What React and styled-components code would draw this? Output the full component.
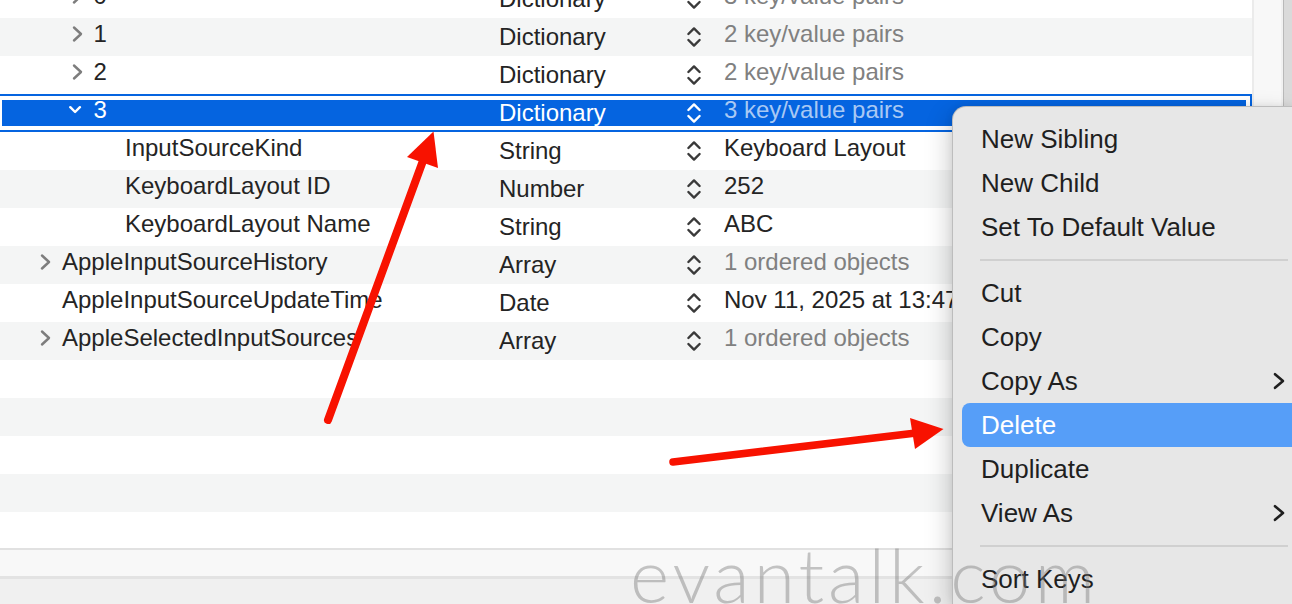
import React from 'react';
import styled, { createGlobalStyle } from 'styled-components';

const GlobalStyle = createGlobalStyle`
  html, body { margin: 0; padding: 0; background: #fff; }
  body { font-family: "Liberation Sans", Arial, sans-serif; overflow: hidden; }
  * { box-sizing: border-box; }
`;

const Window = styled.div`
  position: relative;
  width: 1292px;
  height: 604px;
  overflow: hidden;
  display: flex;
  flex-direction: column;
  background: #f0f0f0;
`;

const Main = styled.div`
  display: flex;
  height: 548px;
  flex: none;
`;

const Outline = styled.div`
  width: 1252px;
  flex: none;
  height: 100%;
  overflow: hidden;
  background: #fff;
`;

const RowList = styled.div`
  margin: -20px 0 0 -4px;
  width: 1256px;
`;

const Row = styled.div`
  display: grid;
  grid-template-columns: 503px 187px 38px 1fr;
  height: 38px;
  font-size: 24px;
  white-space: nowrap;
  color: ${(p) => (p.$selected ? '#ffffff' : '#242424')};
  background: ${(p) => (p.$selected ? '#0564e0' : p.$striped ? '#f4f5f5' : '#ffffff')};
  box-shadow: ${(p) =>
    p.$selected ? 'inset 0 0 0 2px #0564e0, inset 0 0 0 6px #ffffff' : 'none'};
`;

const KeyCell = styled.div`
  display: flex;
  align-items: center;
  padding-left: ${(p) => 41 + p.$level * 31.5}px;
  padding-bottom: 6px;
  line-height: 24px;
  overflow: hidden;
`;

const Disclosure = styled.span`
  width: 25px;
  height: 18px;
  flex: none;
  display: flex;
  align-items: center;
`;

const TypeCell = styled.div`
  line-height: 38px;
  overflow: hidden;
`;

const StepperCell = styled.div`
  display: flex;
  align-items: center;
  padding-bottom: 1px;
`;

const ValueCell = styled.div`
  display: flex;
  align-items: center;
  padding-bottom: 6px;
  line-height: 24px;
  overflow: hidden;
  color: ${(p) =>
    p.$muted ? (p.$selected ? 'rgba(255,255,255,0.66)' : '#808080') : 'inherit'};
`;

const Scroller = styled.div`
  width: 31px;
  flex: none;
  background: #f8f8f8;
  border-left: 2px solid #ebebeb;
  border-right: 2px solid #f1f1f1;
`;

const SidePanel = styled.div`
  flex: 1;
  background: #dadada;
  border-left: 1px solid #b9b9b9;
`;

const FooterBar = styled.div`
  flex: none;
  height: 31px;
  background: #f8f8f8;
  border-top: 2px solid #e1e1e1;
  border-bottom: 3px solid #e3e3e3;
`;

const Menu = styled.div`
  position: absolute;
  left: 952px;
  top: 106px;
  width: 340px;
  height: 498px;
  padding: 10px 0 0 9px;
  background: #e7e7e7;
  border: 1px solid rgba(0, 0, 0, 0.18);
  border-right: none;
  border-bottom: none;
  border-radius: 14px 0 0 0;
  box-shadow: -4px 8px 24px rgba(0, 0, 0, 0.18), 0 0 8px rgba(0, 0, 0, 0.08);
  font-size: 26px;
  color: #1f1f1f;
`;

const MenuItem = styled.div`
  display: flex;
  align-items: center;
  height: 44px;
  line-height: 44px;
  padding: 0 7px 0 19px;
  border-radius: 8px 0 0 8px;
  white-space: nowrap;
  background: ${(p) => (p.$active ? '#569ef8' : 'transparent')};
  color: ${(p) => (p.$active ? '#ffffff' : 'inherit')};
`;

const SubArrow = styled.svg`
  margin-left: auto;
  flex: none;
`;

const Separator = styled.div`
  height: 22px;
  display: flex;
  align-items: center;
  padding: 0 4px 0 18px;
  &::before {
    content: '';
    flex: 1;
    height: 2px;
    background: #d0d0d0;
  }
`;

const Annotations = styled.svg`
  position: absolute;
  left: 0;
  top: 0;
  width: 1292px;
  height: 604px;
  pointer-events: none;
`;

const Watermark = styled.div`
  position: absolute;
  left: 630px;
  top: 537px;
  height: 67px;
  overflow: hidden;
  font-family: Lato, "Open Sans", sans-serif;
  font-weight: 300;
  font-size: 75px;
  line-height: 75px;
  letter-spacing: 4px;
  color: rgba(120, 120, 120, 0.42);
  pointer-events: none;
  white-space: nowrap;
`;

const Chevron = ({ dir, color }) =>
  dir === 'down' ? (
    <svg width="16" height="18" viewBox="0 0 16 18">
      <polyline points="1.3,6.2 6.1,11 10.9,6.2" fill="none" stroke={color} strokeWidth="2.4" strokeLinecap="round" strokeLinejoin="round" />
    </svg>
  ) : (
    <svg width="16" height="18" viewBox="0 0 16 18">
      <polyline points="5,2.5 12,9 5,15.5" fill="none" stroke={color} strokeWidth="2.4" strokeLinecap="round" strokeLinejoin="round" />
    </svg>
  );

const Stepper = ({ color }) => (
  <svg width="16" height="22" viewBox="0 0 16 22">
    <polyline points="2.4,8 8,2.4 13.6,8" fill="none" stroke={color} strokeWidth="2.4" strokeLinecap="round" strokeLinejoin="round" />
    <polyline points="2.4,14 8,19.6 13.6,14" fill="none" stroke={color} strokeWidth="2.4" strokeLinecap="round" strokeLinejoin="round" />
  </svg>
);

const rows = [
  { level: 1, key: '0', chev: 'right', type: 'Dictionary', value: '3 key/value pairs', muted: true },
  { level: 1, key: '1', chev: 'right', type: 'Dictionary', value: '2 key/value pairs', muted: true },
  { level: 1, key: '2', chev: 'right', type: 'Dictionary', value: '2 key/value pairs', muted: true },
  { level: 1, key: '3', chev: 'down', type: 'Dictionary', value: '3 key/value pairs', muted: true, selected: true },
  { level: 2, key: 'InputSourceKind', type: 'String', value: 'Keyboard Layout' },
  { level: 2, key: 'KeyboardLayout ID', type: 'Number', value: '252' },
  { level: 2, key: 'KeyboardLayout Name', type: 'String', value: 'ABC' },
  { level: 0, key: 'AppleInputSourceHistory', chev: 'right', type: 'Array', value: '1 ordered objects', muted: true },
  { level: 0, key: 'AppleInputSourceUpdateTime', type: 'Date', value: 'Nov 11, 2025 at 13:47:21' },
  { level: 0, key: 'AppleSelectedInputSources', chev: 'right', type: 'Array', value: '1 ordered objects', muted: true },
  {}, {}, {}, {}, {},
];

const menu = [
  { label: 'New Sibling' },
  { label: 'New Child' },
  { label: 'Set To Default Value' },
  { sep: true },
  { label: 'Cut' },
  { label: 'Copy' },
  { label: 'Copy As', sub: true },
  { label: 'Delete', active: true },
  { label: 'Duplicate' },
  { label: 'View As', sub: true },
  { sep: true },
  { label: 'Sort Keys' },
];

export default function App() {
  return (
    <>
      <GlobalStyle />
      <Window>
        <Main>
          <Outline>
            <RowList>
              {rows.map((r, i) => {
                const sel = !!r.selected;
                const empty = r.key === undefined;
                return (
                  <Row key={i} $striped={i % 2 === 1} $selected={sel}>
                    {empty ? null : (
                      <>
                        <KeyCell $level={r.level}>
                          <Disclosure>
                            {r.chev && <Chevron dir={r.chev} color={sel ? '#ffffff' : '#7d7d7d'} />}
                          </Disclosure>
                          <span>{r.key}</span>
                        </KeyCell>
                        <TypeCell>{r.type}</TypeCell>
                        <StepperCell>
                          <Stepper color={sel ? '#ffffff' : '#3a3a3a'} />
                        </StepperCell>
                        <ValueCell $muted={r.muted} $selected={sel}>
                          {r.value}
                        </ValueCell>
                      </>
                    )}
                  </Row>
                );
              })}
            </RowList>
          </Outline>
          <Scroller />
          <SidePanel />
        </Main>
        <FooterBar />
      </Window>

      <Menu>
        {menu.map((m, i) =>
          m.sep ? (
            <Separator key={i} />
          ) : (
            <MenuItem key={i} $active={m.active}>
              {m.label}
              {m.sub && (
                <SubArrow width="12" height="18" viewBox="0 0 12 18">
                  <polyline points="2,2.2 10,9 2,15.8" fill="none" stroke="#1f1f1f" strokeWidth="2.6" strokeLinecap="round" strokeLinejoin="round" />
                </SubArrow>
              )}
            </MenuItem>
          )
        )}
      </Menu>

      <Annotations viewBox="0 0 1292 604">
        <line x1="328" y1="420" x2="424" y2="158" stroke="#f81200" strokeWidth="8" strokeLinecap="round" />
        <polygon points="433.5,131.5 438,168 407,157" fill="#f81200" />
        <line x1="673" y1="462" x2="916" y2="433" stroke="#f81200" strokeWidth="7.5" strokeLinecap="round" />
        <polygon points="943.5,429 915,449 910,418" fill="#f81200" />
      </Annotations>

      <Watermark>evantalk.com</Watermark>
    </>
  );
}
